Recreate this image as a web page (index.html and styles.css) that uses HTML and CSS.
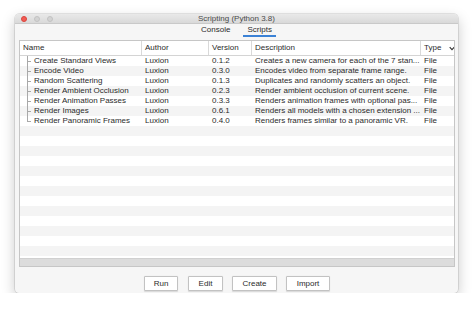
FILE: index.html
```html
<!DOCTYPE html>
<html>
<head>
<meta charset="utf-8">
<link rel="stylesheet" href="styles.css">
</head>
<body>
<div class="window">
  <div class="titlebar">
    <div class="lights">
      <span class="light red"></span>
      <span class="light grey"></span>
      <span class="light grey"></span>
    </div>
    <div class="title">Scripting (Python 3.8)</div>
  </div>
  <div class="tabs">
    <span class="tab">Console</span>
    <span class="tab active">Scripts</span>
  </div>
  <div class="table">
    <div class="row header">
      <div class="cell">Name</div>
      <div class="cell">Author</div>
      <div class="cell">Version</div>
      <div class="cell">Description</div>
      <div class="cell type-h">Type <svg class="chev" width="6" height="5" viewBox="0 0 6 5"><path d="M0.7 1.2 L3 3.6 L5.3 1.2" fill="none" stroke="#333" stroke-width="1.1"/></svg></div>
    </div>
    <div class="body">
      <div class="tree"></div>
      <div class="row"><div class="cell name"><span class="tick"></span>Create Standard Views</div><div class="cell">Luxion</div><div class="cell">0.1.2</div><div class="cell">Creates a new camera for each of the 7 stan...</div><div class="cell">File</div></div>
      <div class="row"><div class="cell name"><span class="tick"></span>Encode Video</div><div class="cell">Luxion</div><div class="cell">0.3.0</div><div class="cell">Encodes video from separate frame range.</div><div class="cell">File</div></div>
      <div class="row"><div class="cell name"><span class="tick"></span>Random Scattering</div><div class="cell">Luxion</div><div class="cell">0.1.3</div><div class="cell">Duplicates and randomly scatters an object.</div><div class="cell">File</div></div>
      <div class="row"><div class="cell name"><span class="tick"></span>Render Ambient Occlusion</div><div class="cell">Luxion</div><div class="cell">0.2.3</div><div class="cell">Render ambient occlusion of current scene.</div><div class="cell">File</div></div>
      <div class="row"><div class="cell name"><span class="tick"></span>Render Animation Passes</div><div class="cell">Luxion</div><div class="cell">0.3.3</div><div class="cell">Renders animation frames with optional pas...</div><div class="cell">File</div></div>
      <div class="row"><div class="cell name"><span class="tick"></span>Render Images</div><div class="cell">Luxion</div><div class="cell">0.6.1</div><div class="cell">Renders all models with a chosen extension ...</div><div class="cell">File</div></div>
      <div class="row"><div class="cell name"><span class="tick"></span>Render Panoramic Frames</div><div class="cell">Luxion</div><div class="cell">0.4.0</div><div class="cell">Renders frames similar to a panoramic VR.</div><div class="cell">File</div></div>
      <div class="row"></div><div class="row"></div><div class="row"></div><div class="row"></div>
      <div class="row"></div><div class="row"></div><div class="row"></div><div class="row"></div>
      <div class="row"></div><div class="row"></div><div class="row"></div><div class="row"></div>
      <div class="row"></div>
    </div>
    <div class="hscroll"></div>
  </div>
  <div class="buttons">
    <button class="btn w-run">Run</button>
    <button class="btn w-edit">Edit</button>
    <button class="btn w-create">Create</button>
    <button class="btn w-import">Import</button>
  </div>
</div>
</body>
</html>
```

FILE: styles.css
```css
* { box-sizing: border-box; }
html, body { margin: 0; padding: 0; background: #ffffff; }
body {
  font-family: "Liberation Sans", Arial, sans-serif;
  font-size: 8px;
  color: #2b2b2b;
  padding: 14px 0 0 15px;
}
.window {
  width: 443px;
  height: 279px;
  background: #f6f6f6;
  border-radius: 4px;
  box-shadow: 0 0 0 0.5px rgba(0,0,0,0.18), 0 5px 14px rgba(0,0,0,0.22);
  display: flex;
  flex-direction: column;
  overflow: hidden;
}
.titlebar {
  height: 10px;
  flex: none;
  background: linear-gradient(#e9e9e9, #d9d9d9);
  border-bottom: 1px solid #c9c9c9;
  display: flex;
  align-items: center;
  position: relative;
}
.lights { display: flex; gap: 7px; padding-left: 6px; }
.light { width: 6px; height: 6px; border-radius: 50%; display: block; }
.red { background: #f25c54; border: 0.5px solid #d8463e; }
.grey { background: #d3d3d3; border: 0.5px solid #c2c2c2; }
.title {
  position: absolute; left: 0; right: 0; top: 0; bottom: 0;
  text-align: center; line-height: 9px; color: #4a4a4a; font-size: 8px;
}
.tabs {
  height: 16px;
  flex: none;
  display: flex;
  justify-content: center;
  gap: 9px;
  padding-top: 1px;
}
.tab {
  height: 12px;
  line-height: 10px;
  padding: 0 4px;
}
.tab.active { border-bottom: 2px solid #3b82d6; }
.table {
  margin: 0 3px 0 4px;
  height: 227px;
  flex: none;
  border: 1px solid #c6c6c6;
  background: #fff;
  display: flex;
  flex-direction: column;
}
.row {
  display: grid;
  grid-template-columns: 122px 67px 43px 169px 1fr;
  height: 10px;
  line-height: 10px;
  flex: none;
}
.row.header {
  height: 15px;
  line-height: 14px;
  border-bottom: 1px solid #d4d4d4;
  background: #fff;
}
.header .cell { border-right: 1px solid #d9d9d9; padding-left: 3px; }
.header .cell:last-child { border-right: none; }
.type-h { display: flex; align-items: center; gap: 8px; }
.chev { display: block; flex: none; }
.body { flex: 1; position: relative; overflow: hidden; }
.body .row:nth-child(even) { background: #fff; }
.body .row:nth-child(odd) { background: #f4f4f4; }
.cell { white-space: nowrap; overflow: hidden; padding-left: 3px; }
.cell.name { padding-left: 14px; position: relative; }
.tree {
  position: absolute;
  left: 7px;
  top: 0;
  height: 66px;
  width: 1px;
  background: #a9a9a9;
  z-index: 1;
}
.tick {
  position: absolute;
  left: 7px;
  top: 5px;
  width: 4px;
  height: 1px;
  background: #a9a9a9;
}
.hscroll {
  height: 8px;
  flex: none;
  background: #dcdcdc;
  border-top: 1px solid #d0d0d0;
}
.buttons {
  display: flex;
  justify-content: center;
  gap: 9px;
  padding-top: 9px;
  padding-left: 1px;
}
.btn {
  height: 15px;
  padding: 0;
  font: inherit;
  color: #2b2b2b;
  background: #fff;
  border: 1px solid #c2c2c2;
  border-radius: 1px;
  box-shadow: 0 0.5px 1px rgba(0,0,0,0.12);
}
.w-run { width: 34px; }
.w-edit { width: 35px; margin-left: 1px; }
.w-create { width: 45px; }
.w-import { width: 44px; }
```
